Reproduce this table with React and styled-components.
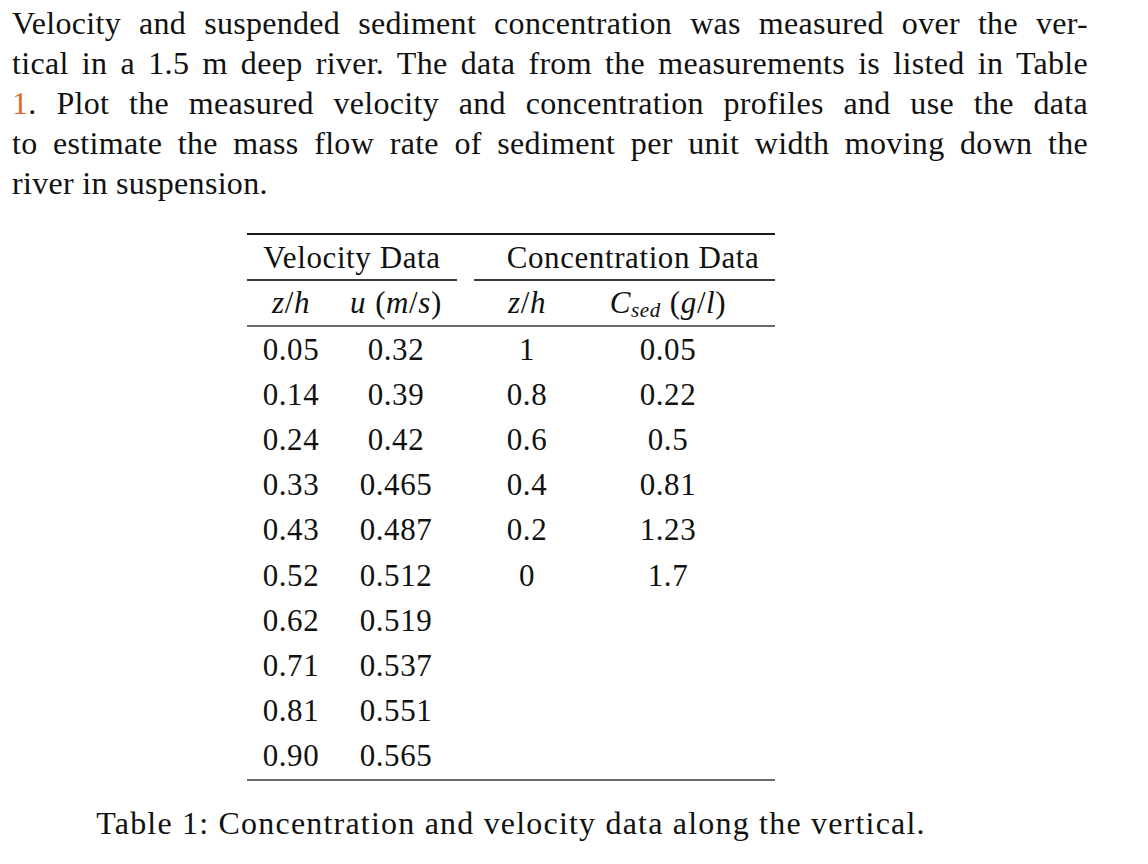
import React from 'react';
import styled, { createGlobalStyle } from 'styled-components';

const velocity = [
	['0.05', '0.32'],
	['0.14', '0.39'],
	['0.24', '0.42'],
	['0.33', '0.465'],
	['0.43', '0.487'],
	['0.52', '0.512'],
	['0.62', '0.519'],
	['0.71', '0.537'],
	['0.81', '0.551'],
	['0.90', '0.565']
];

const concentration = [
	['1', '0.05'],
	['0.8', '0.22'],
	['0.6', '0.5'],
	['0.4', '0.81'],
	['0.2', '1.23'],
	['0', '1.7']
];

const App = () => {
	return (
		<Page>
			<GlobalStyle />
			<Paragraph>
				<Line>Velocity and suspended sediment concentration was measured over the ver-</Line>
				<Line>tical in a 1.5 m deep river. The data from the measurements is listed in Table</Line>
				<Line>
					<Ref>1</Ref>. Plot the measured velocity and concentration profiles and use the data
				</Line>
				<Line>to estimate the mass flow rate of sediment per unit width moving down the</Line>
				<Line last>river in suspension.</Line>
			</Paragraph>

			<Figure>
				<Table>
					<GroupHead>
						<span>Velocity Data</span>
					</GroupHead>
					<GroupHead offset>
						<span>Concentration Data</span>
					</GroupHead>

					<HeadCell>
						<i>z</i>/<i>h</i>
					</HeadCell>
					<HeadCell>
						<i>u</i>
						<Gap />(<i>m</i>/<i>s</i>)
					</HeadCell>
					<HeadCell>
						<i>z</i>/<i>h</i>
					</HeadCell>
					<HeadCell wide>
						<i>C</i>
						<Sub>sed</Sub>
						<Gap />(<i>g</i>/<i>l</i>)
					</HeadCell>

					{velocity.map((row, i) => (
						<React.Fragment key={i}>
							<Cell last={i === velocity.length - 1}>{row[0]}</Cell>
							<Cell last={i === velocity.length - 1}>{row[1]}</Cell>
							<Cell last={i === velocity.length - 1}>
								{concentration[i] ? concentration[i][0] : ''}
							</Cell>
							<Cell wide last={i === velocity.length - 1}>
								{concentration[i] ? concentration[i][1] : ''}
							</Cell>
						</React.Fragment>
					))}
				</Table>
				<Caption>Table 1: Concentration and velocity data along the vertical.</Caption>
			</Figure>
		</Page>
	);
};

const GlobalStyle = createGlobalStyle`
	html, body {
		margin: 0;
		padding: 0;
		background: #ffffff;
	}
	body {
		font-family: 'Liberation Serif', 'Times New Roman', serif;
		color: #111111;
	}
`;

const Page = styled.div`
	width: 1148px;
	min-height: 864px;
	padding-top: 3px;
	box-sizing: border-box;
`;

const Paragraph = styled.div`
	margin-left: 12px;
	width: 1076px;
	font-size: 32px;
	letter-spacing: 0.3px;
	line-height: 40px;
`;

const Line = styled.div`
	text-align: ${(p) => (p.last ? 'left' : 'justify')};
	text-align-last: ${(p) => (p.last ? 'left' : 'justify')};
	white-space: nowrap;
`;

const Ref = styled.span`
	color: #e4672a;
`;

const Figure = styled.div`
	width: 1022px;
	margin-top: 30px;
	display: flex;
	flex-direction: column;
	align-items: center;
`;

const Table = styled.div`
	width: 528px;
	display: grid;
	grid-template-columns: 88px 122px 140px 178px;
	border-top: 2px solid #1a1a1a;
	font-size: 31px;
	letter-spacing: 0.6px;
`;

const GroupHead = styled.div`
	grid-column: ${(p) => (p.offset ? '3 / 5' : '1 / 3')};
	height: 46px;
	display: flex;
	align-items: center;
	justify-content: center;
	padding-left: ${(p) => (p.offset ? '34px' : '0')};
	box-sizing: border-box;
	position: relative;

	&::after {
		content: '';
		position: absolute;
		left: ${(p) => (p.offset ? '17px' : '0')};
		right: 0;
		bottom: 0;
		height: 2px;
		background: #3a3a3a;
	}
`;

const HeadCell = styled.div`
	height: 46px;
	display: flex;
	align-items: center;
	justify-content: center;
	padding-right: ${(p) => (p.wide ? '36px' : '0')};
	border-bottom: 2px solid #6a6a6a;
	box-sizing: border-box;

	i {
		font-style: italic;
	}
`;

const Gap = styled.span`
	display: inline-block;
	width: 9px;
`;

const Sub = styled.i`
	font-size: 21px;
	position: relative;
	top: 7px;
`;

const Cell = styled.div`
	height: 45.2px;
	display: flex;
	align-items: center;
	justify-content: center;
	padding-right: ${(p) => (p.wide ? '36px' : '0')};
	border-bottom: ${(p) => (p.last ? '2px solid #6a6a6a' : 'none')};
	box-sizing: content-box;
`;

const Caption = styled.div`
	margin-top: 22px;
	font-size: 32px;
	letter-spacing: 1.2px;
	line-height: 40px;
	text-align: center;
`;

export default App;
